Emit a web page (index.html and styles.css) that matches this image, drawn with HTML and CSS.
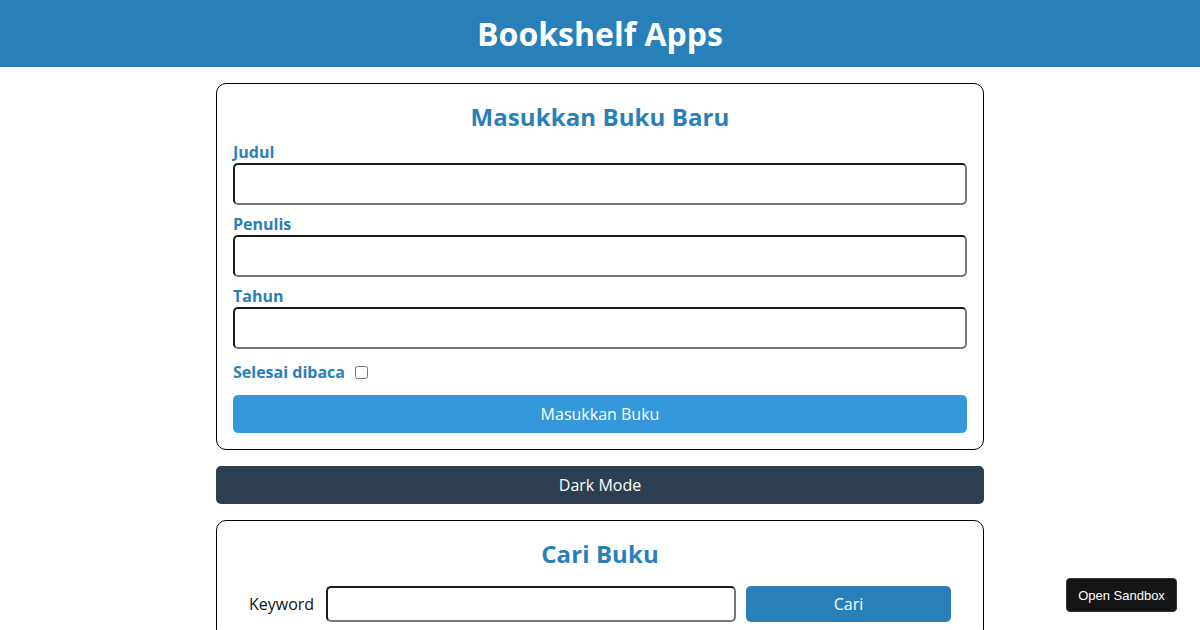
FILE: index.html
```html
<!DOCTYPE html>
<html lang="id">
<head>
    <meta charset="UTF-8">
    <meta name="viewport" content="width=device-width, initial-scale=1.0">
    <title>Bookshelf Apps</title>
    <link rel="stylesheet" href="styles.css">
</head>
<body>

<header class="head-bar">
    <h1>Bookshelf Apps</h1>
</header>

<main class="main">
    <section class="card input-section">
        <h2>Masukkan Buku Baru</h2>
        <form class="input-form" id="inputBook">
            <div class="input">
                <label for="inputBookTitle">Judul</label>
                <input id="inputBookTitle" type="text">
            </div>
            <div class="input">
                <label for="inputBookAuthor">Penulis</label>
                <input id="inputBookAuthor" type="text">
            </div>
            <div class="input">
                <label for="inputBookYear">Tahun</label>
                <input id="inputBookYear" type="number">
            </div>
            <div class="input-inline">
                <label for="inputBookIsComplete">Selesai dibaca</label>
                <input id="inputBookIsComplete" type="checkbox">
            </div>
            <button class="btn-submit" type="submit">Masukkan Buku</button>
        </form>
    </section>

    <button class="btn-dark" type="button">Dark Mode</button>

    <section class="card search-section">
        <h2>Cari Buku</h2>
        <form class="search-form" id="searchBook">
            <label for="searchBookTitle">Keyword</label>
            <input id="searchBookTitle" type="text">
            <button class="btn-search" type="submit">Cari</button>
        </form>
    </section>
</main>

<a class="sandbox-btn" href="#">Open Sandbox</a>

</body>
</html>
```

FILE: styles.css
```css
* {
    box-sizing: border-box;
}
body {
    margin: 0;
    font-family: "Open Sans", sans-serif;
    color: #111;
}
.head-bar {
    background-color: #2980b9;
    color: white;
    height: 67px;
    display: flex;
    align-items: center;
    justify-content: center;
}
.head-bar h1 {
    margin: 0;
    font-size: 32px;
    font-weight: 700;
}
.main {
    width: 768px;
    margin: 16px auto 0;
    display: flex;
    flex-direction: column;
    gap: 16px;
}
.card {
    border: 1px solid black;
    border-radius: 10px;
    padding: 16px;
}
.card h2 {
    margin: 0;
    text-align: center;
    color: #2980b9;
    font-size: 24px;
    line-height: 33px;
    letter-spacing: 0.1px;
}
.input-form {
    display: flex;
    flex-direction: column;
    gap: 8px;
    margin-top: 8px;
}
.input {
    display: flex;
    flex-direction: column;
}
.input label,
.input-inline label {
    color: #2980b9;
    font-weight: 700;
    font-size: 16px;
    line-height: 22px;
}
.input input,
.search-form input {
    font-family: inherit;
    font-size: 16px;
    border: 2px solid;
    border-color: #1a1a1a #767676 #767676 #1a1a1a;
    border-radius: 5px;
    padding: 8px;
    height: 42px;
}
.input-inline {
    display: flex;
    align-items: center;
    gap: 10px;
    margin: 4px 0;
}
.input-inline input {
    margin: 0;
    width: 13px;
    height: 13px;
}
.btn-submit,
.btn-dark,
.btn-search {
    font-family: inherit;
    font-size: 16px;
    color: white;
    border: none;
    border-radius: 5px;
    cursor: pointer;
}
.btn-submit {
    background-color: #3498db;
    height: 38px;
}
.btn-dark {
    background-color: #2c3e50;
    height: 38px;
}
.search-form {
    display: flex;
    align-items: center;
    gap: 10px;
    padding: 0 16px;
    margin-top: 16px;
}
.search-form label {
    flex: 1;
    font-size: 16px;
}
.search-form input {
    flex: none;
    width: 410px;
    height: 36px;
}
.btn-search {
    flex: none;
    width: 205px;
    background-color: #2980b9;
    height: 36px;
}
.sandbox-btn {
    position: fixed;
    right: 23px;
    bottom: 18px;
    width: 111px;
    height: 34px;
    display: flex;
    align-items: center;
    justify-content: center;
    background-color: #151515;
    border: 1px solid #333;
    border-radius: 4px;
    color: white;
    font-family: "Liberation Sans", Arial, sans-serif;
    font-size: 13px;
    text-decoration: none;
}
```
